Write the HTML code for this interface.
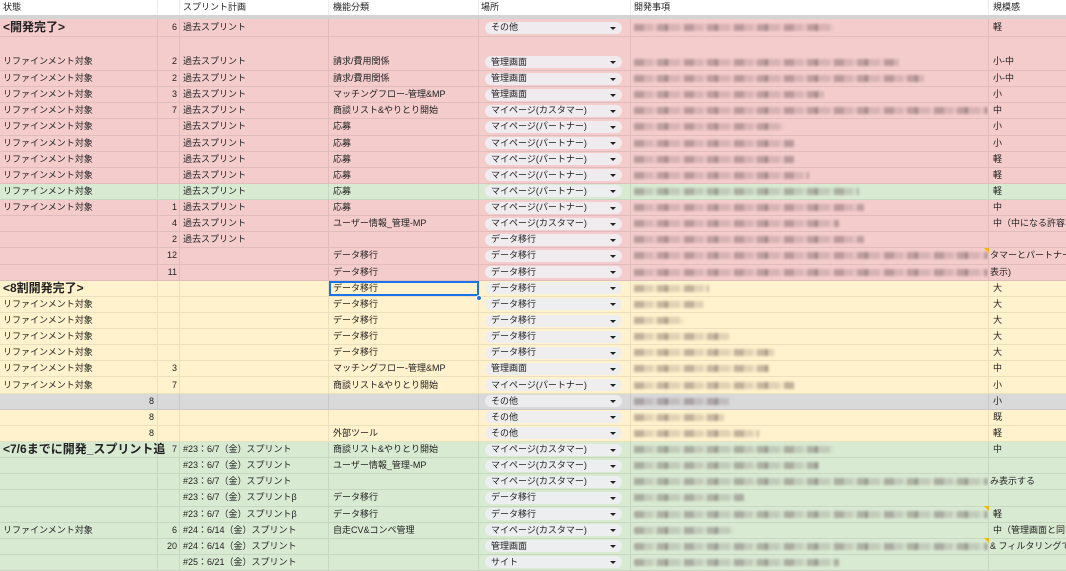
<!DOCTYPE html>
<html><head><meta charset="utf-8"><style>
*{box-sizing:border-box;margin:0;padding:0}
body{width:1066px;height:568px;overflow:hidden;background:#fff;font-family:"Liberation Sans","Noto Sans CJK JP",sans-serif;font-size:9px;color:#222;position:relative}
.r{position:absolute;left:0;width:1066px;display:flex;border-bottom:1px solid rgba(0,0,0,.08)}
.r>div{height:100%;display:flex;align-items:center;white-space:nowrap;overflow:hidden;border-right:1px solid rgba(0,0,0,.08);position:relative;line-height:11px}
.a{width:158px;padding-left:3px}.b{width:22px;justify-content:flex-end;padding-right:2px}.c{width:149px;padding-left:3px}.d{width:150px;padding-left:4px}.e{width:152px}.f{width:358px;padding-left:3px}.g{width:77px;padding-left:4px;overflow:visible!important;border-right:none!important}
.p{background:#f4cccc}.y{background:#fff2cc}.gr{background:#d9ead3}.gy{background:#d9d9d9}
.pill{margin-left:6px;width:137px;height:12px;border-radius:6px;background:rgba(238,238,241,.92);padding-left:6px;display:flex;align-items:center;line-height:11px;position:relative}
.pill:after{content:"";position:absolute;right:6px;top:5px;border-left:3px solid transparent;border-right:3px solid transparent;border-top:3px solid #222}
.bl{height:7px;filter:blur(1.3px);opacity:.75;background:repeating-linear-gradient(90deg,rgba(90,70,75,.5) 0 10px,rgba(90,70,75,.25) 10px 19px,rgba(90,70,75,.1) 19px 23px,rgba(90,70,75,.45) 23px 31px,rgba(60,50,50,.6) 31px 34px,rgba(90,70,75,.25) 34px 46px,rgba(90,70,75,.08) 46px 50px)}
.h{font-weight:bold;font-size:12px;overflow:visible!important}
.tri{position:absolute;width:5px;height:5px;background:#f4b400;clip-path:polygon(0 0,100% 0,100% 100%);left:984px}
</style></head><body>
<div class="r" style="top:0;height:15px;border-bottom:none"><div class="a">状態</div><div class="b"></div><div class="c">スプリント計画</div><div class="d">機能分類</div><div class="e" style="padding-left:2px">場所</div><div class="f">開発事項</div><div class="g">規模感</div></div>
<div style="position:absolute;top:15px;left:0;width:1066px;height:4px;background:#d4d4d4"></div>

<div class="r p" style="top:19px;height:18px"><div class="a h">&lt;開発完了&gt;</div><div class="b">6</div><div class="c">過去スプリント</div><div class="d"></div><div class="e"><div class="pill">その他</div></div><div class="f"><div class="bl" style="width:200px"></div></div><div class="g">軽</div></div>
<div class="r p" style="top:37px;height:34px"><div class="a" style="align-items:flex-end;padding-bottom:3px">リファインメント対象</div><div class="b" style="align-items:flex-end;padding-bottom:3px">2</div><div class="c" style="align-items:flex-end;padding-bottom:3px">過去スプリント</div><div class="d" style="align-items:flex-end;padding-bottom:3px">請求/費用関係</div><div class="e" style="align-items:flex-end;padding-bottom:2px"><div class="pill">管理画面</div></div><div class="f" style="align-items:flex-end;padding-bottom:4px"><div class="bl" style="width:265px"></div></div><div class="g" style="align-items:flex-end;padding-bottom:3px">小-中</div></div>

<div id="rows"></div>
<script>
var R=[
["p","リファインメント対象","2","過去スプリント","請求/費用関係","管理画面",290,"小-中"],
["p","リファインメント対象","3","過去スプリント","マッチングフロー-管理&MP","管理画面",190,"小"],
["p","リファインメント対象","7","過去スプリント","商談リスト&やりとり開始","マイページ(カスタマー)",354,"中"],
["p","リファインメント対象","","過去スプリント","応募","マイページ(パートナー)",150,"小"],
["p","リファインメント対象","","過去スプリント","応募","マイページ(パートナー)",160,"小"],
["p","リファインメント対象","","過去スプリント","応募","マイページ(パートナー)",160,"軽"],
["p","リファインメント対象","","過去スプリント","応募","マイページ(パートナー)",175,"軽"],
["gr","リファインメント対象","","過去スプリント","応募","マイページ(パートナー)",225,"軽"],
["p","リファインメント対象","1","過去スプリント","応募","マイページ(パートナー)",230,"中"],
["p","","4","過去スプリント","ユーザー情報_管理-MP","マイページ(カスタマー)",205,"中（中になる許容"],
["p","","2","過去スプリント","","データ移行",230,""],
["p","","12","","データ移行","データ移行",354,"タマーとパートナー"],
["p","","11","","データ移行","データ移行",354,"表示)"],
["y","<8割開発完了>","","","データ移行","データ移行",75,"大",1],
["y","リファインメント対象","","","データ移行","データ移行",70,"大"],
["y","リファインメント対象","","","データ移行","データ移行",50,"大"],
["y","リファインメント対象","","","データ移行","データ移行",95,"大"],
["y","リファインメント対象","","","データ移行","データ移行",140,"大"],
["y","リファインメント対象","3","","マッチングフロー-管理&MP","管理画面",135,"中"],
["y","リファインメント対象","7","","商談リスト&やりとり開始","マイページ(パートナー)",160,"小"],
["gy","@8","","","","その他",95,"小"],
["y","@8","","","","その他",90,"既"],
["y","@8","","","外部ツール","その他",125,"軽"],
["gr","<7/6までに開発_スプリント追","7","#23：6/7（金）スプリント","商談リスト&やりとり開始","マイページ(カスタマー)",200,"中",1],
["gr","","","#23：6/7（金）スプリント","ユーザー情報_管理-MP","マイページ(カスタマー)",185,""],
["gr","","","#23：6/7（金）スプリント","","マイページ(カスタマー)",354,"み表示する"],
["gr","","","#23：6/7（金）スプリントβ","データ移行","データ移行",110,""],
["gr","","","#23：6/7（金）スプリントβ","データ移行","データ移行",354,"軽"],
["gr","リファインメント対象","6","#24：6/14（金）スプリント","自走CV&コンペ管理","マイページ(カスタマー)",100,"中（管理画面と同"],
["gr","","20","#24：6/14（金）スプリント","","管理画面",354,"& フィルタリングで"],
["gr","","","#25：6/21（金）スプリント","","サイト",205,""]
];
var h="",t=71,H=16.13;
R.forEach(function(r,i){
 var top=(t+i*H).toFixed(2);
 var a=r[1],ac="a";
 if(a.charAt(0)=="@"){a=a.slice(1);ac="a' style='justify-content:flex-end;padding-right:3px";}
 if(r[8])ac="a h";
 a=a.replace(/</g,"&lt;").replace(/>/g,"&gt;");
 var sel=(i==13)?"style='outline:2px solid #1a73e8;outline-offset:-2px'":"";
 var g=r[7];
 var gs=(g&&(g.charAt(0)=="タ"||g.charAt(0)=="表"||g.charAt(0)=="み"||g.charAt(0)=="&"))?" style='padding-left:1px'":"";
 h+="<div class='r "+r[0]+"' style='top:"+top+"px;height:"+H+"px'><div class='"+ac+"'>"+a+"</div><div class='b'>"+r[2]+"</div><div class='c'>"+r[3]+"</div><div class='d' "+sel+">"+r[4]+"</div><div class='e'><div class='pill'>"+r[5]+"</div></div><div class='f'><div class='bl' style='width:"+r[6]+"px'></div></div><div class='g'"+gs+">"+g+"</div></div>";
});
document.getElementById("rows").innerHTML=h;
</script>
<div style="position:absolute;left:476px;top:295px;width:6px;height:6px;border-radius:3px;background:#1a73e8;border:1px solid #fff"></div>
<div class="tri" style="top:248px"></div>
<div class="tri" style="top:506px"></div>
<div class="tri" style="top:538px"></div>
</body></html>
